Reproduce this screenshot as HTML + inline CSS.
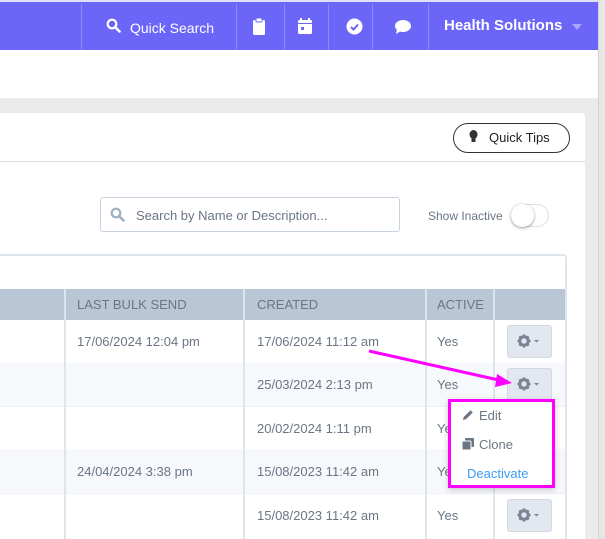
<!DOCTYPE html>
<html style="width:605px;height:539px;overflow:hidden"><head><style>
*{box-sizing:border-box;margin:0;padding:0}
body{width:605px;height:539px;overflow:hidden;position:relative;background:#ebebeb;font-family:"Liberation Sans",sans-serif;}
.abs{position:absolute}
.nav{left:0;top:0;width:598px;height:50px;background:#6b65f8;border-top:2px solid #e0e0f0}
.vd{position:absolute;top:2px;width:1px;height:48px;background:#8f8afa}
.nt{position:absolute;color:#fff;font-size:14px;top:18px}
.scroll{left:598px;top:0;width:7px;height:539px;background:#e6e6e6;border-left:1px solid #d4d4d4}
.gear{position:absolute;left:507px;width:45px;height:33px;background:#e3e8f0;border:1px solid #d2d9e3;border-radius:3px}
.gi{position:absolute;left:517px}
</style></head><body>
<div class="abs nav">
 <div class="vd" style="left:81px"></div><div class="vd" style="left:236px"></div><div class="vd" style="left:284px"></div><div class="vd" style="left:328px"></div><div class="vd" style="left:372px"></div><div class="vd" style="left:428px"></div>
 <svg class="abs" style="left:106px;top:16px" width="15" height="15" viewBox="0 0 15 15"><circle cx="6" cy="6" r="4.3" fill="none" stroke="#fff" stroke-width="2.2"/><path d="M9 9l4.5 4.5" stroke="#fff" stroke-width="2.6" stroke-linecap="round"/></svg>
 <div class="nt" style="left:130px">Quick Search</div>
 <svg class="abs" style="left:252px;top:16px" width="14" height="17" viewBox="0 0 14 17"><rect x="1" y="2" width="12" height="15" rx="1.5" fill="#fff"/><rect x="4" y="0" width="6" height="4" rx="1" fill="#fff" stroke="#6b65f8" stroke-width="1"/></svg>
 <svg class="abs" style="left:298px;top:16px" width="14" height="16" viewBox="0 0 14 16"><rect x="0" y="2" width="14" height="14" rx="1.5" fill="#fff"/><rect x="2" y="0" width="2" height="4" fill="#fff"/><rect x="10" y="0" width="2" height="4" fill="#fff"/><rect x="0" y="5" width="14" height="1" fill="#6b65f8"/><rect x="3" y="9" width="3" height="3" fill="#6b65f8"/></svg>
 <svg class="abs" style="left:346px;top:16px" width="17" height="17" viewBox="0 0 17 17"><circle cx="8.5" cy="8.5" r="8" fill="#fff"/><path d="M5 9l2.5 2.5 4.5-5" fill="none" stroke="#6b65f8" stroke-width="2"/></svg>
 <svg class="abs" style="left:394px;top:17px" width="18" height="16" viewBox="0 0 18 16"><ellipse cx="9" cy="7" rx="8" ry="6" fill="#fff"/><path d="M3 10l-1 5 5-3z" fill="#fff"/></svg>
 <div class="nt" style="left:444px;top:15px;font-weight:bold;font-size:15px">Health Solutions</div>
 <div class="abs" style="left:572px;top:22px;border:5px solid transparent;border-top:6px solid #a9a5fb"></div>
</div>
<div class="abs" style="left:0;top:50px;width:598px;height:48px;background:#fff"></div>
<div class="abs" style="left:0;top:113px;width:585px;height:426px;background:#fff;border-radius:0 4px 0 0"></div>
<div class="abs" style="left:0;top:161px;width:585px;height:1px;background:#dcdcdc"></div>
<div class="abs" style="left:453px;top:123px;width:117px;height:30px;border:1px solid #333;border-radius:15px;font-size:13px;color:#222;padding:6px 0 0 35px">Quick Tips</div>
<svg class="abs" style="left:469px;top:130px" width="9" height="14" viewBox="0 0 9 14"><ellipse cx="4.5" cy="4.5" rx="4" ry="4.5" fill="#333"/><rect x="2.5" y="8" width="4" height="4" fill="#333"/></svg>
<div class="abs" style="left:100px;top:197px;width:300px;height:35px;border:1px solid #c9d3df;border-radius:3px;font-size:13px;color:#6b7684;padding:10px 0 0 35px">Search by Name or Description...</div>
<svg class="abs" style="left:110px;top:207px" width="15" height="15" viewBox="0 0 15 15"><circle cx="6" cy="6" r="4.3" fill="none" stroke="#9fb0c4" stroke-width="2.2"/><path d="M9 9l4.5 4.5" stroke="#9fb0c4" stroke-width="2.6" stroke-linecap="round"/></svg>
<div class="abs" style="left:428px;top:209px;font-size:12px;color:#6b7684">Show Inactive</div>
<div class="abs" style="left:511px;top:204px;width:38px;height:23px;border:1px solid #dde2e8;border-radius:12px;background:#fff"></div>
<div class="abs" style="left:511px;top:204px;width:23px;height:23px;border-radius:50%;background:#fff;box-shadow:0 1px 3px rgba(0,0,0,.4)"></div>
<div class="abs" style="left:-3px;top:254px;width:570px;height:287px;border:2px solid #dde4ec;border-radius:4px"></div>
<div class="abs" style="left:0;top:289px;width:565px;height:31px;background:#b9c6d6"></div>
<div class="abs" style="left:0;top:363px;width:565px;height:43px;background:#f6f8fb"></div>
<div class="abs" style="left:0;top:449px;width:565px;height:44px;background:#f6f8fb"></div>
<div class="abs" style="left:0;top:406px;width:565px;height:1px;background:#edf0f4"></div>
<div class="abs" style="left:0;top:493px;width:565px;height:1px;background:#edf0f4"></div>
<div class="abs" style="left:64px;top:289px;width:2px;height:250px;background:#dde4ec"></div>
<div class="abs" style="left:243px;top:289px;width:2px;height:250px;background:#dde4ec"></div>
<div class="abs" style="left:425px;top:289px;width:2px;height:250px;background:#dde4ec"></div>
<div class="abs" style="left:493px;top:289px;width:2px;height:250px;background:#dde4ec"></div>
<div class="abs" style="left:77px;top:297px;font-size:13px;color:#6b7684">LAST BULK SEND</div>
<div class="abs" style="left:257px;top:297px;font-size:13px;color:#6b7684">CREATED</div>
<div class="abs" style="left:437px;top:297px;font-size:13px;color:#6b7684">ACTIVE</div>
<div class="abs" style="left:77px;top:334px;font-size:13px;color:#6b7684">17/06/2024 12:04 pm</div>
<div class="abs" style="left:77px;top:464px;font-size:13px;color:#6b7684">24/04/2024 3:38 pm</div>
<div class="abs" style="left:257px;top:334px;font-size:13px;color:#6b7684">17/06/2024 11:12 am</div>
<div class="abs" style="left:257px;top:377px;font-size:13px;color:#6b7684">25/03/2024 2:13 pm</div>
<div class="abs" style="left:257px;top:421px;font-size:13px;color:#6b7684">20/02/2024 1:11 pm</div>
<div class="abs" style="left:257px;top:464px;font-size:13px;color:#6b7684">15/08/2023 11:42 am</div>
<div class="abs" style="left:257px;top:508px;font-size:13px;color:#6b7684">15/08/2023 11:42 am</div>
<div class="abs" style="left:437px;top:334px;font-size:13px;color:#6b7684">Yes</div>
<div class="abs" style="left:437px;top:377px;font-size:13px;color:#6b7684">Yes</div>
<div class="abs" style="left:437px;top:421px;font-size:13px;color:#6b7684">Yes</div>
<div class="abs" style="left:437px;top:464px;font-size:13px;color:#6b7684">Yes</div>
<div class="abs" style="left:437px;top:508px;font-size:13px;color:#6b7684">Yes</div>
<div class="gear" style="top:325px"></div><div class="gear" style="top:368px"></div><div class="gear" style="top:499px"></div>
<svg width="0" height="0" style="position:absolute"><defs><g id="g"><circle cx="7" cy="7" r="4.2" fill="none" stroke="#7a8594" stroke-width="3"/><g stroke="#7a8594" stroke-width="2.6"><path d="M7 0.5v3M7 10.5v3M0.5 7h3M10.5 7h3M2.4 2.4l2.1 2.1M9.5 9.5l2.1 2.1M2.4 11.6l2.1-2.1M9.5 4.5l2.1-2.1"/></g><path d="M17 6h5l-2.5 2.5z" fill="#7a8594"/></g></defs></svg>
<svg class="gi" style="top:334px" width="24" height="14"><use href="#g"/></svg>
<svg class="gi" style="top:377px" width="24" height="14"><use href="#g"/></svg>
<svg class="gi" style="top:508px" width="24" height="14"><use href="#g"/></svg>
<div class="abs" style="left:448px;top:399px;width:107px;height:89px;background:#fff;border:3px solid #ff00ff;box-shadow:0 2px 6px rgba(0,0,0,.2)"></div>
<svg class="abs" style="left:462px;top:409px" width="12" height="12" viewBox="0 0 12 12"><path d="M1 11l0.7-3L8.5 1.2l2.3 2.3L4 10.3z" fill="#6b7684"/></svg>
<div class="abs" style="left:479px;top:408px;font-size:13px;color:#6b7684">Edit</div>
<svg class="abs" style="left:462px;top:438px" width="12" height="12" viewBox="0 0 12 12"><rect x="3" y="0" width="9" height="9" rx="1" fill="#6b7684"/><rect x="0" y="3" width="9" height="9" rx="1" fill="#6b7684" stroke="#fff" stroke-width="1"/></svg>
<div class="abs" style="left:479px;top:437px;font-size:13px;color:#6b7684">Clone</div>
<div class="abs" style="left:467px;top:466px;font-size:13px;color:#3b9cf5">Deactivate</div>
<svg class="abs" style="left:0;top:0" width="605" height="539"><path d="M369 351L503 381" stroke="#ff00ff" stroke-width="3"/><path d="M512 383L497 374L495 387Z" fill="#ff00ff"/></svg>
<div class="abs scroll"></div>
</body></html>
